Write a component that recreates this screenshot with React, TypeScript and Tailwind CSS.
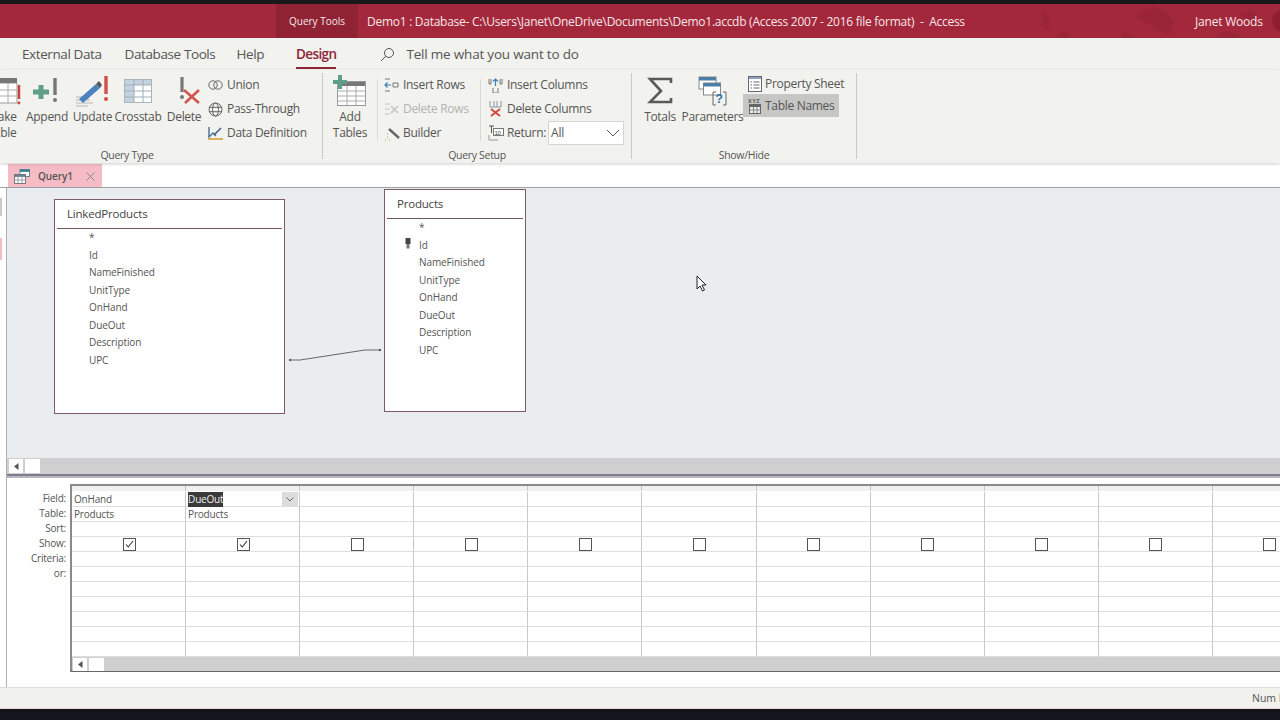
import type { ReactNode } from 'react';

function MakeTableIcon() {
  return (
    <svg width="44" height="30" viewBox="0 0 44 30">
      <path d="M10 7h27v20H10z" fill="#fff" stroke="#999" />
      <rect x="10" y="2" width="27" height="5" fill="#777" />
      <path d="M10 14h27M10 20h27M19 7v20M28 7v20" stroke="#aaa" />
      <path d="M39 9v14" stroke="#c8443f" strokeWidth="2.4" />
      <circle cx="39" cy="27" r="1.4" fill="#c8443f" />
    </svg>
  );
}

function AppendIcon() {
  return (
    <svg width="34" height="30" viewBox="0 0 34 30">
      <path d="M11 9v14M3 16h16" stroke="#5f9f8a" strokeWidth="5" />
      <path d="M25 2v17" stroke="#777" strokeWidth="3.4" />
      <circle cx="25" cy="24" r="2" fill="#777" />
    </svg>
  );
}

function UpdateIcon() {
  return (
    <svg width="36" height="32" viewBox="0 0 36 32">
      <path d="M1 22h9M1 25h14M1 28h17M1 31h12" stroke="#b5b5b5" />
      <path d="M4 24L21 9l4 4L8 28z" fill="#4a83bd" />
      <path d="M21 9l3-3 3 4-2 3z" fill="#555" />
      <path d="M31 1v18" stroke="#d0504a" strokeWidth="3.4" />
      <circle cx="31" cy="24" r="2" fill="#d0504a" />
    </svg>
  );
}

function CrosstabIcon() {
  return (
    <svg width="28" height="25" viewBox="0 0 28 25">
      <rect x="0.5" y="0.5" width="27" height="23" fill="#fff" stroke="#a9b4bd" />
      <rect x="1" y="1" width="26" height="5" fill="#c3d2de" />
      <rect x="1" y="1" width="9" height="22" fill="#c3d2de" />
      <path d="M1 6h26M1 12h26M1 18h26M10 1v22M19 1v22" stroke="#9fadb8" />
    </svg>
  );
}

function DeleteIcon() {
  return (
    <svg width="34" height="30" viewBox="0 0 34 30">
      <path d="M15 1v15" stroke="#777" strokeWidth="3.2" />
      <circle cx="15" cy="21" r="2" fill="#777" />
      <path d="M17 14l15 13M32 14L18 27" stroke="#d2554e" strokeWidth="2.6" />
    </svg>
  );
}

function UnionIcon() {
  return (
    <svg width="15" height="12" viewBox="0 0 15 12" fill="none" stroke="#666">
      <circle cx="5" cy="6" r="4.2" />
      <circle cx="10" cy="6" r="4.2" />
    </svg>
  );
}

function GlobeIcon() {
  return (
    <svg width="15" height="15" viewBox="0 0 15 15" fill="none" stroke="#666">
      <circle cx="7.5" cy="7.5" r="6.5" />
      <ellipse cx="7.5" cy="7.5" rx="3" ry="6.5" />
      <path d="M1 5.3h13M1 9.7h13" />
    </svg>
  );
}

function DefinitionIcon() {
  return (
    <svg width="15" height="15" viewBox="0 0 15 15" fill="none">
      <path d="M1 1v10l4-4 3 3" stroke="#4a6f94" strokeWidth="1.4" />
      <path d="M6 9l7-7" stroke="#3d5f85" strokeWidth="1.6" />
      <path d="M0 13h15" stroke="#d6b25e" strokeWidth="2" />
    </svg>
  );
}

function AddTablesIcon() {
  return (
    <svg width="34" height="32" viewBox="0 0 34 32">
      <rect x="4.5" y="6.5" width="28" height="24" fill="#fff" stroke="#999" />
      <rect x="5" y="7" width="27" height="4" fill="#777" />
      <path d="M5 16h27M5 21h27M5 26h27M14 11v19M23 11v19" stroke="#aaa" />
      <path d="M7 0v14M0 7h14" stroke="#5f9f8a" strokeWidth="4" />
    </svg>
  );
}

function InsertRowsIcon() {
  return (
    <svg width="15" height="15" viewBox="0 0 15 15" fill="none">
      <path d="M1 1h5M1 13h5M9 5h5v4H9z" stroke="#777" />
      <path d="M7 7H1M3.5 4.5L1 7l2.5 2.5" stroke="#3f7fb5" strokeWidth="1.2" />
    </svg>
  );
}

function DeleteRowsIcon() {
  return (
    <svg width="15" height="15" viewBox="0 0 15 15" fill="none" stroke="#c4c4c2">
      <path d="M1 2h5M1 7h5M1 12h5" />
      <path d="M7 4l7 7M14 4l-7 7" strokeWidth="1.5" />
    </svg>
  );
}

function BuilderIcon() {
  return (
    <svg width="16" height="15" viewBox="0 0 16 15" fill="none">
      <path d="M5 3l10 9" stroke="#666" strokeWidth="2.4" />
      <path d="M3 11h.8M1 14h.8M5 14h.8M3 8h.8" stroke="#b98a2e" strokeWidth="1.2" />
    </svg>
  );
}

function InsertColumnsIcon() {
  return (
    <svg width="15" height="15" viewBox="0 0 15 15" fill="none">
      <path d="M1 1v5h2V1M12 1v5h2V1M5 10v5h5v-5" stroke="#777" />
      <path d="M7.5 8V1M5 3.5L7.5 1 10 3.5" stroke="#3f7fb5" strokeWidth="1.2" />
    </svg>
  );
}

function DeleteColumnsIcon() {
  return (
    <svg width="15" height="16" viewBox="0 0 15 16" fill="none">
      <path d="M2 0v6h11V0M6 0v6M9 0v6" stroke="#8a97a5" />
      <path d="M3 8l9 7M12 8l-9 7" stroke="#d2443d" strokeWidth="1.8" />
    </svg>
  );
}

function ReturnIcon() {
  return (
    <svg width="16" height="16" viewBox="0 0 16 16" fill="none">
      <path d="M1 1h5M3.5 1v7" stroke="#555" />
      <rect x="5.5" y="3.5" width="10" height="7" fill="#fff" stroke="#777" />
      <text x="6.5" y="9.5" fontSize="6" fill="#444" fontFamily="Liberation Sans, sans-serif">10</text>
      <path d="M1 10v5h9" stroke="#999" />
    </svg>
  );
}

function SigmaIcon() {
  return (
    <svg width="26" height="28" viewBox="0 0 26 28" fill="none">
      <path d="M24 6V2H3l11 12L3 25h21v-4" stroke="#5a5a5a" strokeWidth="2.6" />
    </svg>
  );
}

function ParametersIcon() {
  return (
    <svg width="30" height="30" viewBox="0 0 30 30" fill="none">
      <rect x="1" y="1" width="17" height="12" fill="#fff" stroke="#888" />
      <rect x="1" y="1" width="17" height="3.5" fill="#4c7ea6" />
      <rect x="5.5" y="7" width="17" height="12" fill="#fff" stroke="#888" />
      <rect x="5.5" y="7" width="17" height="3.5" fill="#4c7ea6" />
      <path d="M18 16h-3v13h3M25 16h3v13h-3" stroke="#666" />
      <text x="17.5" y="27" fontSize="12" fontWeight="700" fill="#2a6fa8" fontFamily="Liberation Sans, sans-serif">?</text>
    </svg>
  );
}

function PropertySheetIcon() {
  return (
    <svg width="14" height="16" viewBox="0 0 14 16" fill="none" stroke="#667">
      <rect x="0.5" y="0.5" width="13" height="15" fill="#fff" />
      <rect x="1" y="1" width="12" height="2" fill="#8fa3b5" stroke="none" />
      <path d="M2.5 6h1.5M2.5 9h1.5M2.5 12h1.5M5.5 6h6M5.5 9h6M5.5 12h6" />
    </svg>
  );
}

function TableNamesIcon() {
  return (
    <svg width="15" height="16" viewBox="0 0 15 16" fill="none">
      <text x="0" y="5" fontSize="5.5" fontWeight="700" fill="#555" fontFamily="Liberation Sans, sans-serif" letterSpacing="0.5">XYZ</text>
      <rect x="1.5" y="6.5" width="11" height="9" fill="#eee" stroke="#666" />
      <rect x="2" y="7" width="10" height="2" fill="#666" />
      <path d="M2 12h10M5.5 9v6M9 9v6" stroke="#888" />
    </svg>
  );
}

function QueryTabIcon() {
  return (
    <svg width="16" height="15" viewBox="0 0 16 15">
      <rect x="6" y="0.5" width="9.5" height="7" fill="#fff" stroke="#5d8a9c" />
      <rect x="6" y="0.5" width="9.5" height="2.4" fill="#3e7f8f" />
      <rect x="0.5" y="5.5" width="11" height="9" fill="#fff" stroke="#777" />
      <rect x="0.5" y="5.5" width="11" height="2.4" fill="#6f7f8a" />
      <path d="M0.5 11h11M4 8v6M8 8v6" stroke="#8fa0a8" />
    </svg>
  );
}

function LargeButton({ icon, lines, className }: { icon: ReactNode; lines: string[]; className: string }) {
  return (
    <div className={`flex shrink-0 flex-col items-center ${className}`}>
      <div className="flex h-[36px] w-full items-center justify-center">{icon}</div>
      {lines.map((line) => (
        <span key={line} className="whitespace-nowrap leading-[16px]">
          {line}
        </span>
      ))}
    </div>
  );
}

function SmallButton({ icon, label, muted }: { icon: ReactNode; label: string; muted?: boolean }) {
  return (
    <div className={`flex h-[24px] items-center whitespace-nowrap ${muted ? 'text-[#b4b4b2]' : ''}`}>
      <span className="flex w-[19px] shrink-0 items-center">{icon}</span>
      {label}
    </div>
  );
}

function RibbonGroup({ label, width, className, children }: { label: string; width: string; className?: string; children: ReactNode }) {
  return (
    <div className={`flex shrink-0 flex-col ${width} ${className ?? ''}`}>
      <div className="flex flex-1 pt-[3px]">{children}</div>
      <div className="h-[16px] text-center text-[10.5px] leading-[16px] text-[#555]">{label}</div>
    </div>
  );
}

function RibbonSeparator() {
  return <div className="mb-[4px] mt-[3px] w-px shrink-0 bg-[#c9c9c5]" />;
}

function DesignTable({ name, fields, keyed, className }: { name: string; fields: string[]; keyed?: boolean; className: string }) {
  return (
    <div className={`absolute border border-[#7c5a68] bg-white ${className}`}>
      <div className="mx-[2px] flex h-[29px] items-center border-b border-[#6e5560] pl-[10px] text-[11.5px] tracking-[-0.2px] text-[#444]">
        {name}
      </div>
      <div className="text-[10px] tracking-[-0.1px] text-[#555]">
        {fields.map((field) => (
          <div key={field} className="relative flex h-[17.5px] items-center pl-[34px]">
            {keyed && field === 'Id' && (
              <svg width="6" height="11" viewBox="0 0 6 11" className="absolute left-[20px] top-[1px]">
                <rect x="0.5" y="0" width="5" height="6" fill="#444" />
                <rect x="1.5" y="6" width="3" height="4.5" fill="#777" />
              </svg>
            )}
            {field}
          </div>
        ))}
      </div>
    </div>
  );
}

function ScrollArrow() {
  return (
    <div className="flex items-center gap-[2px]">
      <div className="flex h-[14px] w-[14px] items-center justify-center bg-white">
        <svg width="5" height="7" viewBox="0 0 5 7">
          <path d="M4.5 0v7L0 3.5z" fill="#555" />
        </svg>
      </div>
      <div className="h-[14px] w-[15px] bg-white" />
    </div>
  );
}

const FIELDS = ['*', 'Id', 'NameFinished', 'UnitType', 'OnHand', 'DueOut', 'Description', 'UPC'];
const ROW_LABELS = ['Field:', 'Table:', 'Sort:', 'Show:', 'Criteria:', 'or:'];
const COLUMNS = Array.from({ length: 11 }, (_, i) => i);
const ROWS = Array.from({ length: 11 }, (_, i) => i);

function GridCell({ row, col }: { row: number; col: number }) {
  let content: ReactNode = null;
  if (row === 0 && col === 0) content = <span className="pl-[1px]">OnHand</span>;
  if (row === 0 && col === 1) {
    content = (
      <>
        <span className="ml-[1px] bg-[#3a3a3a] text-[#eee]">DueOut</span>
        <span className="absolute right-[1px] top-0 flex h-[14px] w-[16px] items-center justify-center bg-[#dcdcdc]">
          <svg width="8" height="5" viewBox="0 0 8 5" fill="none" stroke="#666">
            <path d="M0.5 0.5L4 4l3.5-3.5" />
          </svg>
        </span>
      </>
    );
  }
  if (row === 1 && col < 2) content = <span className="pl-[1px]">Products</span>;
  if (row === 3) {
    content = (
      <span className="mx-auto flex h-[13px] w-[13px] items-center justify-center border border-[#555] bg-white">
        {col < 2 && (
          <svg width="9" height="8" viewBox="0 0 9 8" fill="none" stroke="#333" strokeWidth="1.1">
            <path d="M1 4.5L3.2 7 8 1" />
          </svg>
        )}
      </span>
    );
  }
  return <div className="relative flex h-[15px] items-center border-b border-r border-b-[#dedede] border-r-[#c8c8c8] pl-[1px]">{content}</div>;
}

export default function App() {
  return (
    <div
      className="flex h-[720px] w-[1280px] flex-col overflow-hidden bg-[#14141c] text-[#444]"
      style={{ fontFamily: '"Open Sans", "Noto Sans", sans-serif' }}
    >
      <div className="h-[4px] shrink-0 bg-[#18181a]" />

      {/* title bar */}
      <div className="relative flex h-[34px] shrink-0 items-center bg-[#a3283c] text-[12px] text-[#f6e6e8]">
        <svg width="240" height="34" viewBox="0 0 240 34" className="absolute left-[1030px] top-0 opacity-40">
          <path d="M14 6l6 8-2 12-7-6zM30 28l6-2 2 8H26zM110 8l14-6 12 6 8 10-6 12-12-4-10-8-10-4zM90 34l4-8 8 8zM186 34l8-8 14 4 2 4zM210 10l12-4 10 10-10 6z" fill="#8f2334" />
        </svg>
        <div className="ml-[276px] flex h-full w-[82px] items-center justify-center bg-[#8f2333] pt-[1px] text-[10px]">
          Query Tools
        </div>
        <span className="relative ml-[9px] whitespace-nowrap pt-[1px] tracking-[-0.27px]">
          Demo1 : Database- C:\Users\Janet\OneDrive\Documents\Demo1.accdb (Access 2007 - 2016 file format)&nbsp; -&nbsp; Access
        </span>
        <span className="absolute left-[1195px] whitespace-nowrap pt-[1px] tracking-[-0.2px]">Janet Woods</span>
        <span className="absolute left-[1272px] flex h-[22px] w-[22px] items-center justify-center rounded-full bg-[#8f1f30] text-[11px]">
          J
        </span>
      </div>

      {/* ribbon tabs */}
      <div className="flex h-[32px] shrink-0 items-center bg-[#f2f2ee] pl-[22px] text-[13.5px] tracking-[-0.4px] text-[#555]">
        <span>External Data</span>
        <span className="ml-[23px]">Database Tools</span>
        <span className="ml-[21px]">Help</span>
        <span className="relative ml-[32px] font-semibold tracking-[-0.6px] text-[#8e2638]">
          Design
          <span className="absolute -bottom-[5px] left-0 h-[2px] w-full bg-[#8e2638]" />
        </span>
        <svg width="15" height="15" viewBox="0 0 15 15" fill="none" stroke="#555" className="ml-[44px]">
          <circle cx="9" cy="6" r="4.5" />
          <path d="M5.8 9.2L1 14" />
        </svg>
        <span className="ml-[11px] tracking-[-0.2px]">Tell me what you want to do</span>
      </div>

      {/* ribbon */}
      <div className="z-10 flex h-[93px] shrink-0 bg-[#f2f2ee] text-[12px] tracking-[-0.3px] text-[#555] shadow-[0_1px_3px_rgba(0,0,0,0.2)]">
        <RibbonGroup label="Query Type" width="w-[390px]" className="-ml-[68px]">
          <LargeButton className="ml-[48px] w-[44px]" icon={<MakeTableIcon />} lines={['Make', 'Table']} />
          <LargeButton className="w-[46px]" icon={<AppendIcon />} lines={['Append']} />
          <LargeButton className="w-[45px]" icon={<UpdateIcon />} lines={['Update']} />
          <LargeButton className="w-[46px]" icon={<CrosstabIcon />} lines={['Crosstab']} />
          <LargeButton className="w-[46px]" icon={<DeleteIcon />} lines={['Delete']} />
          <div className="ml-[1px]">
            <SmallButton icon={<UnionIcon />} label="Union" />
            <SmallButton icon={<GlobeIcon />} label="Pass-Through" />
            <SmallButton icon={<DefinitionIcon />} label="Data Definition" />
          </div>
        </RibbonGroup>
        <RibbonSeparator />
        <RibbonGroup label="Query Setup" width="w-[308px]">
          <LargeButton className="w-[54px]" icon={<AddTablesIcon />} lines={['Add', 'Tables']} />
          <div className="mt-[6px] h-[62px] w-px bg-[#d8d8d4]" />
          <div className="w-[102px] pl-[6px]">
            <SmallButton icon={<InsertRowsIcon />} label="Insert Rows" />
            <SmallButton icon={<DeleteRowsIcon />} label="Delete Rows" muted />
            <SmallButton icon={<BuilderIcon />} label="Builder" />
          </div>
          <div className="mt-[6px] h-[62px] w-px bg-[#d8d8d4]" />
          <div className="pl-[7px]">
            <SmallButton icon={<InsertColumnsIcon />} label="Insert Columns" />
            <SmallButton icon={<DeleteColumnsIcon />} label="Delete Columns" />
            <div className="flex h-[24px] items-center whitespace-nowrap">
              <span className="flex w-[19px] shrink-0 items-center">
                <ReturnIcon />
              </span>
              Return:
              <div className="ml-[2px] flex h-[24px] w-[76px] items-center justify-between border border-[#d4d4d0] bg-white pl-[2px] pr-[3px]">
                All
                <svg width="14" height="8" viewBox="0 0 14 8" fill="none" stroke="#555">
                  <path d="M1 1l6 6 6-6" />
                </svg>
              </div>
            </div>
          </div>
        </RibbonGroup>
        <RibbonSeparator />
        <RibbonGroup label="Show/Hide" width="w-[224px]">
          <LargeButton className="ml-[4px] w-[48px]" icon={<SigmaIcon />} lines={['Totals']} />
          <LargeButton className="w-[57px]" icon={<ParametersIcon />} lines={['Parameters']} />
          <div className="ml-[2px]">
            <div className="flex h-[21px] items-center whitespace-nowrap pl-[5px]">
              <span className="flex w-[17px] shrink-0 items-center">
                <PropertySheetIcon />
              </span>
              Property Sheet
            </div>
            <div className="flex h-[23px] w-[96px] items-center whitespace-nowrap bg-[#c6c6c4] pl-[5px]">
              <span className="flex w-[17px] shrink-0 items-center">
                <TableNamesIcon />
              </span>
              Table Names
            </div>
          </div>
        </RibbonGroup>
        <RibbonSeparator />
      </div>

      {/* document tabs */}
      <div className="flex h-[25px] shrink-0 items-end border-b border-[#a0a0a0] bg-white pl-[8px]">
        <div className="flex h-[23px] w-[94px] items-center bg-[#f5bcc6] pl-[6px] pt-[1px] text-[10px] font-semibold tracking-[-0.1px] text-[#555]">
          <QueryTabIcon />
          <span className="ml-[8px]">Query1</span>
          <svg width="9" height="9" viewBox="0 0 9 9" stroke="#8a8a8a" className="ml-[13px]">
            <path d="M0.5 0.5l8 8M8.5 0.5l-8 8" />
          </svg>
        </div>
      </div>

      <div className="flex h-[499px] shrink-0">
        {/* collapsed navigation pane */}
        <div className="w-[7px] shrink-0 border-r border-[#b0b0b0] bg-white pt-[10px]">
          <div className="h-[18px] w-[2px] bg-[#c8c8c8]" />
          <div className="mt-[22px] h-[22px] w-[2px] bg-[#f5bcc6]" />
        </div>

        <div className="flex min-w-0 flex-1 flex-col">
          {/* table diagram */}
          <div className="relative h-[270px] shrink-0 bg-[#e9edf0]">
            <DesignTable name="LinkedProducts" fields={FIELDS} className="left-[47px] top-[11px] h-[215px] w-[231px]" />
            <DesignTable name="Products" fields={FIELDS} keyed className="left-[377px] top-[1px] h-[223px] w-[142px]" />
            <svg width="100" height="16" viewBox="0 0 100 16" fill="none" stroke="#444" strokeWidth="0.8" className="absolute left-[281px] top-[158px]">
              <path d="M2 14h10L77 4h15" />
              <circle cx="2" cy="14" r="0.8" fill="#444" />
              <circle cx="92" cy="4" r="0.8" fill="#444" />
            </svg>
            <svg width="12" height="17" viewBox="0 0 12 17" className="absolute left-[689px] top-[87px]">
              <path d="M1 1v13l3-3 2.5 5 2-1-2.5-5H10z" fill="#fff" stroke="#222" />
            </svg>
          </div>
          <div className="flex h-[16px] shrink-0 items-center bg-[#cfcfcf] pl-[2px]">
            <ScrollArrow />
          </div>
          <div className="h-[4px] shrink-0 border-t-2 border-[#7d7d90] bg-[#b8b8c0]" />

          {/* query grid */}
          <div className="flex min-h-0 flex-1 bg-white pt-[6px]">
            <div className="w-[59px] shrink-0 pt-[7px] text-right text-[10px] tracking-[-0.2px] text-[#555]">
              {ROW_LABELS.map((label) => (
                <div key={label} className="flex h-[15px] items-center justify-end">
                  {label}
                </div>
              ))}
            </div>
            <div className="ml-[4px] h-[188px] min-w-0 flex-1 overflow-hidden border-b border-l-2 border-t-2 border-[#8a8a8a] border-b-[#666]">
              <div className="grid h-[5px] grid-cols-[repeat(11,114.1px)]">
                {COLUMNS.map((col) => (
                  <div key={col} className="border-r border-[#c8c8c8] bg-[#f0f0f0]" />
                ))}
              </div>
              <div className="grid grid-cols-[repeat(11,114.1px)] pt-[1px] text-[10px] tracking-[-0.2px] text-[#555]">
                {ROWS.map((row) => COLUMNS.map((col) => <GridCell key={`${row}-${col}`} row={row} col={col} />))}
              </div>
              <div className="flex h-[15px] items-center bg-[#cfcfcf] pl-[1px]">
                <ScrollArrow />
              </div>
            </div>
          </div>
        </div>
      </div>

      {/* status bar */}
      <div className="flex h-[22px] shrink-0 items-center justify-end border-b border-t border-b-[#f0d0d6] border-t-[#dcdcdc] bg-[#f1f1ed] pt-[1px] text-[10.5px] text-[#555]">
        <span className="w-[28px] overflow-hidden whitespace-nowrap">Num Lock</span>
      </div>
    </div>
  );
}
